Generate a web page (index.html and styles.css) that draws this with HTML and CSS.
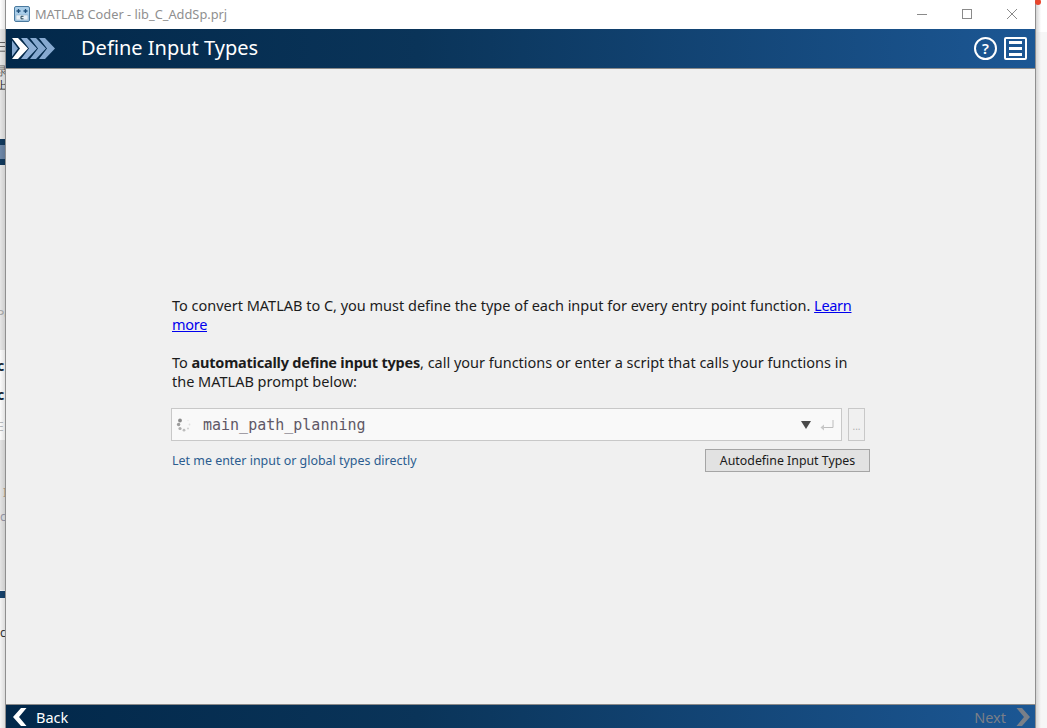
FILE: index.html
```html
<!DOCTYPE html>
<html lang="en">
<head>
<meta charset="utf-8">
<title>MATLAB Coder - lib_C_AddSp.prj</title>
<link rel="stylesheet" href="styles.css">
</head>
<body>
<div class="desktop">
  <aside class="behind-left">
    <span class="frag frag-1">三</span>
    <span class="frag frag-2">录</span>
    <span class="frag frag-3">上</span>
    <div class="band band-top"></div>
    <span class="frag frag-4">Po</span>
    <div class="rows">
      <span class="frag-c">c</span>
      <span class="frag-c">c</span>
      <span class="frag-e">E</span>
    </div>
    <span class="frag frag-5">I</span>
    <span class="frag frag-6">ic</span>
    <div class="band band-low"></div>
    <span class="frag frag-7">ic</span>
  </aside>
  <main class="window">
    <div class="titlebar">
      <svg class="app-icon" width="16" height="16" viewBox="0 0 16 16">
        <rect x="0.500" y="0.500" width="15" height="15" rx="1.500" fill="#a9cde8" stroke="#4a7a9f"/>
        <rect x="2" y="9" width="12" height="5" fill="#e6eff6" stroke="#7fa3bf" stroke-width="0.500"/>
        <path d="M2.500 5h4M4.500 3v4M9.500 5h4M11.500 3v4" stroke="#1f4f7a" stroke-width="1.300"/>
        <path d="M9.500 10.300H7v2.500h2.500" fill="none" stroke="#245" stroke-width="1"/>
      </svg>
      <span class="title-text">MATLAB Coder - lib_C_AddSp.prj</span>
      <div class="win-controls">
        <svg class="win-btn" width="12" height="12" viewBox="0 0 12 12"><path d="M1 6.500h10" stroke="#8a8a8a"/></svg>
        <svg class="win-btn" width="12" height="12" viewBox="0 0 12 12"><rect x="1.500" y="1.500" width="9" height="9" fill="none" stroke="#8a8a8a"/></svg>
        <svg class="win-btn" width="12" height="12" viewBox="0 0 12 12"><path d="M1 1l10 10M11 1L1 11" stroke="#8a8a8a"/></svg>
      </div>
    </div>
    <header class="header">
      <svg class="chevrons" width="43" height="21" viewBox="0 0 43 21">
        <path d="M27 0h6l10 10.500-10 10.500h-6l8-10.500z" fill="#86a9d0"/>
        <path d="M18 0h6l10 10.500-10 10.500h-6l8-10.500z" fill="#86a9d0"/>
        <path d="M9 0h6l10 10.500-10 10.500H9l8-10.500z" fill="#8fb0d6"/>
        <path d="M0 0h6l10 10.500L6 21H0l8-10.500z" fill="#fff"/>
        <path d="M0 2.500l6 8-6 8z" fill="#86a9d0"/>
      </svg>
      <h1 class="header-title">Define Input Types</h1>
      <div class="header-actions">
        <span class="help">?</span>
        <span class="menu"><i></i><i></i><i></i></span>
      </div>
    </header>
    <section class="content">
      <div class="panel">
        <p class="para">To convert MATLAB to C, you must define the type of each input for every entry point function. <a class="learn" href="#">Learn more</a></p>
        <p class="para para-last">To <b class="strong">automatically define input types</b>, call your functions or enter a script that calls your functions in the MATLAB prompt below:</p>
        <div class="prompt-row">
          <div class="prompt">
            <svg class="spinner" width="16" height="16" viewBox="0 0 16 16">
              <circle cx="4" cy="3.500" r="1.900" fill="#8b8b8b"/>
              <circle cx="2.600" cy="7.500" r="1.700" fill="#9c9c9c"/>
              <circle cx="4" cy="11.500" r="1.600" fill="#adadad"/>
              <circle cx="8" cy="13.200" r="1.400" fill="#bdbdbd"/>
              <circle cx="12" cy="11.500" r="1.100" fill="#d2d2d2"/>
              <circle cx="13.500" cy="7.500" r="0.900" fill="#dedede"/>
              <circle cx="12" cy="3.500" r="0.700" fill="#e6e6e6"/>
            </svg>
            <span class="prompt-text">main_path_planning</span>
            <span class="arrow"></span>
            <svg class="enter" width="15" height="12" viewBox="0 0 15 12"><path d="M14 1v7.500H3" fill="none" stroke="#bdbdbd"/><path d="M5 5.500L1.500 8.500 5 11.500z" fill="#c8c8c8"/></svg>
          </div>
          <div class="more">...</div>
        </div>
        <div class="action-row">
          <a class="direct-link" href="#">Let me enter input or global types directly</a>
          <button class="autodefine" type="button">Autodefine Input Types</button>
        </div>
      </div>
    </section>
    <footer class="footer">
      <div class="nav nav-left">
        <svg class="nav-back" width="15" height="18" viewBox="0 0 15 18"><path d="M9 0h5.500L7 9l7.500 9H9L1 9z" fill="#fff"/></svg>
        <span class="back-label">Back</span>
      </div>
      <div class="nav nav-right">
        <span class="next-label">Next</span>
        <svg class="nav-next" width="15" height="18" viewBox="0 0 15 18"><path d="M6 0H.5L8 9 .5 18H6l8-9z" fill="#7a7f88"/></svg>
      </div>
    </footer>
  </main>
  <aside class="behind-right"><span class="red-dot"></span></aside>
</div>
</body>
</html>
```

FILE: styles.css
```css
* { box-sizing: border-box; }
html, body { margin: 0; height: 100%; overflow: hidden; }
body { font-family: "Noto Sans", "Open Sans", sans-serif; background: #fff; }
.desktop { display: flex; width: 1047px; height: 728px; }

.behind-left {
  position: relative;
  width: 5px;
  flex: none;
  overflow: hidden;
  background: linear-gradient(#fff 0 29px, #e6e6e6 29px 350px, #fbfbfb 350px 440px, #e4e4e4 440px 590px, #f4f4f4 590px);
}
.behind-left::after {
  content: "";
  position: absolute;
  inset: 0;
  background: linear-gradient(90deg, rgba(0, 0, 0, 0), rgba(0, 0, 0, 0.1));
}
.frag { position: absolute; left: -4px; font-size: 12px; line-height: 14px; color: #444; }
.frag-1 { top: 40px; }
.frag-2 { top: 64px; color: #666; }
.frag-3 { top: 78px; color: #222; font-size: 11px; }
.frag-4 { top: 308px; left: -3px; color: #aaa; }
.frag-5 { top: 486px; left: 3px; color: #b9a48f; }
.frag-6 { top: 510px; left: -3px; color: #99a; }
.frag-7 { top: 626px; left: -3px; color: #333; }
.band { position: absolute; left: 0; width: 100%; }
.band-top { top: 139px; height: 26px; background: linear-gradient(#123a5e 0 6px, #6d87a8 6px 20px, #123a5e 20px); }
.band-low { top: 591px; height: 7px; background: #16426c; }
.rows { position: absolute; top: 350px; left: 0; width: 100%; height: 90px; }
.frag-c { position: absolute; left: -3px; font-size: 14px; line-height: 16px; font-weight: 700; color: #123; }
.frag-c:nth-child(1) { top: 8px; }
.frag-c:nth-child(2) { top: 37px; }
.frag-e { position: absolute; left: -3px; top: 68px; font-size: 12px; color: #bbb; }

.window {
  display: flex;
  flex-direction: column;
  width: 1031px;
  flex: none;
  background: #f0f0f0;
  border-left: 1px solid #8f8f8f;
  border-right: 1px solid #8f8f8f;
}
.titlebar { display: flex; align-items: center; height: 29px; flex: none; background: #fff; padding: 0 0 2px 8px; }
.app-icon { flex: none; }
.title-text { margin-left: 5px; font-size: 12.800px; color: #8f8f8f; }
.win-controls { display: flex; margin-left: auto; gap: 33px; padding: 0 17px 0 0; }
.win-btn { display: block; }

.header {
  display: flex;
  align-items: center;
  height: 40px;
  flex: none;
  padding: 0 8px 0 6px;
  background: linear-gradient(90deg, #02284a 0%, #0a3459 40%, #1c5794 100%);
  border-bottom: 1px solid #8a8a8a;
}
.chevrons { flex: none; }
.header-title { margin: 0 0 3px 26px; font-size: 20px; font-weight: 400; color: #fff; }
.header-actions { display: flex; align-items: center; gap: 7px; margin-left: auto; }
.help {
  display: flex; align-items: center; justify-content: center;
  width: 23px; height: 23px;
  border: 2px solid #fff; border-radius: 50%;
  font-size: 15px; font-weight: 600; color: #fff; line-height: 1;
}
.menu {
  display: flex; flex-direction: column; justify-content: center; gap: 3px;
  width: 23px; height: 23px; padding: 0 3px;
  border: 2px solid #fff; border-radius: 2px;
}
.menu i { display: block; height: 3px; background: #fff; }

.content { flex: 1; display: flex; flex-direction: column; justify-content: flex-start; padding: 227px 0 0 165px; }
.panel { width: 699px; }
.para { margin: 0 0 19px 1px; max-width: 688px; font-size: 14.500px; line-height: 19px; letter-spacing: -0.01px; color: #1c1c1c; }
.para-last { margin-bottom: 17px; }
.strong { letter-spacing: -0.22px; }
.learn { color: #0000ee; text-decoration: underline; letter-spacing: -0.3px; }
.prompt-row { display: flex; align-items: stretch; gap: 6px; height: 33px; }
.prompt {
  display: flex; align-items: center;
  width: 671px; height: 33px;
  padding: 0 7px 0 4px;
  background: #f9f9f9;
  border: 1px solid #c8c8c8;
}
.spinner { flex: none; }
.prompt-text { margin-left: 11px; font-family: "DejaVu Sans Mono", "Liberation Mono", monospace; font-size: 15px; color: #5f5866; }
.arrow { margin-left: auto; width: 0; height: 0; border-left: 5px solid transparent; border-right: 5px solid transparent; border-top: 8px solid #4a4a4a; }
.enter { margin-left: 8px; flex: none; }
.more { display: flex; align-items: flex-end; justify-content: center; width: 17px; padding-bottom: 9px; border: 1px solid #c8c8c8; font-size: 10px; line-height: 10px; color: #b0b0b0; }
.action-row { display: flex; align-items: center; justify-content: space-between; margin-top: 8px; }
.direct-link { margin-left: 1px; font-size: 12.450px; color: #2b5c8f; text-decoration: none; }
.autodefine {
  width: 165px; height: 23px; padding: 0;
  background: #e2e2e2;
  border: 1px solid #a5a5a5;
  font: 12.350px "Noto Sans", sans-serif;
  color: #1a1a1a;
}

.footer {
  display: flex; align-items: center; justify-content: space-between;
  height: 24px; flex: none;
  padding: 0 4px 0 6px;
  background: linear-gradient(90deg, #02284a 0%, #0a3459 40%, #1c5794 100%);
  border-top: 1px solid #8a8a8a;
}
.nav { display: flex; align-items: center; }
.nav-left { gap: 9px; }
.nav-right { gap: 10px; }
.nav svg { flex: none; }
.back-label { font-size: 14.500px; color: #fff; }
.next-label { font-size: 14.500px; color: #7a7f88; }

.behind-right {
  flex: 1;
  position: relative;
  background: linear-gradient(90deg, #d4d4d4, rgba(255, 255, 255, 0) 5px), linear-gradient(#fff 0 32px, #f6f6f6 32px);
}
.red-dot { position: absolute; left: -1px; top: -1px; width: 6px; height: 6px; border-radius: 50%; background: #e8452c; }
```
